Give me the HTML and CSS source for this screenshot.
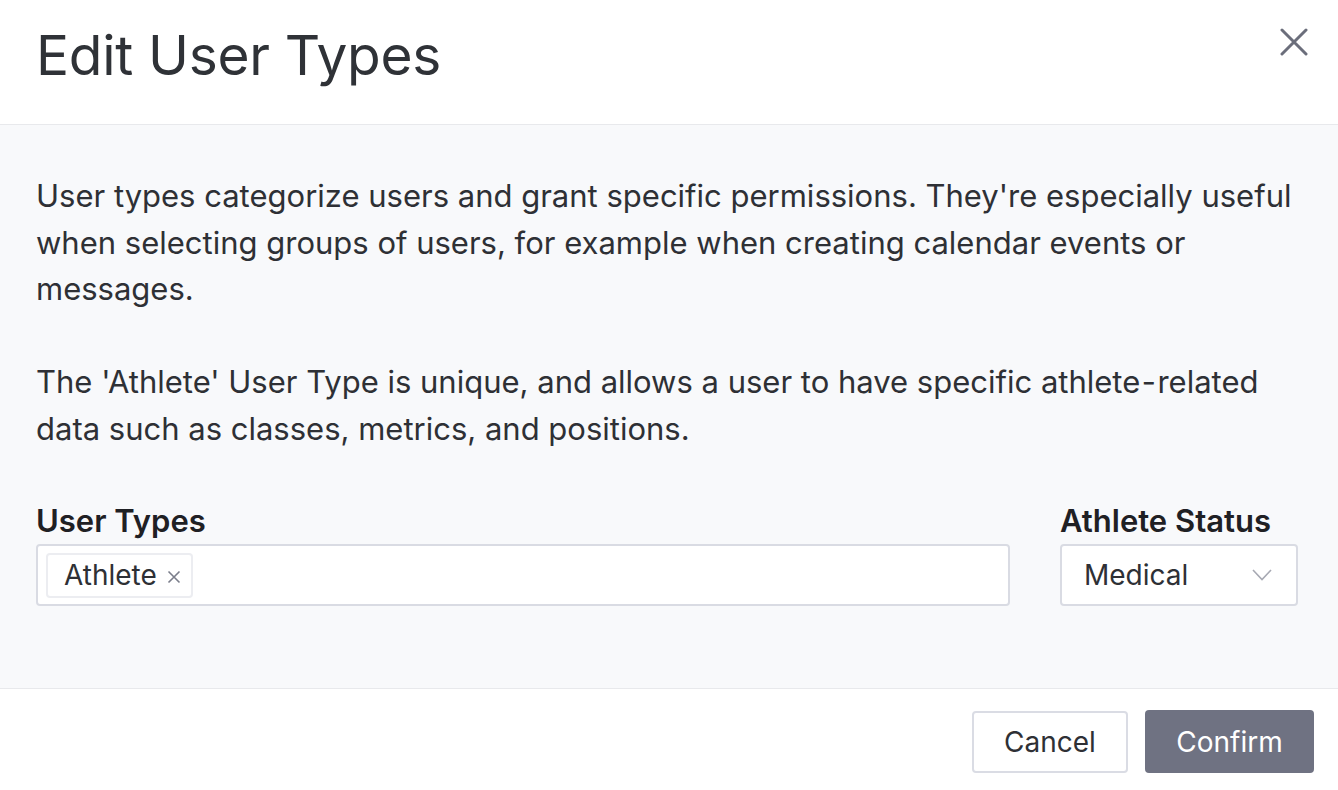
FILE: index.html
```html
<!DOCTYPE html>
<html>
<head>
<meta charset="utf-8">
<link rel="stylesheet" href="styles.css">
</head>
<body>
<div class="modal">
  <header class="head">
    <h1 class="title">Edit User Types</h1>
    <button class="close" aria-label="Close">
      <svg width="28" height="28" viewBox="0 0 28 28"><path d="M2 2L26 26M26 2L2 26" stroke="#6b6e7b" stroke-width="3" stroke-linecap="round"/></svg>
    </button>
  </header>
  <section class="body">
    <p class="para">User types categorize users and grant specific permissions. They're especially useful when selecting groups of users, for example when creating calendar events or messages.</p>
    <p class="para">The 'Athlete' User Type is unique, and allows a user to have specific athlete<span class="nbh">&#8209;</span>related data such as classes, metrics, and positions.</p>
    <div class="fields">
      <div class="field grow">
        <label class="label">User Types</label>
        <div class="input">
          <span class="chip">Athlete
            <svg class="chip-x" width="14" height="14" viewBox="0 0 14 14"><path d="M1.5 1.5L12.5 12.5M12.5 1.5L1.5 12.5" stroke="#7a7d8a" stroke-width="1.6"/></svg>
          </span>
        </div>
      </div>
      <div class="field status">
        <label class="label">Athlete Status</label>
        <div class="select">
          <span>Medical</span>
          <svg width="20" height="12" viewBox="0 0 20 12"><path d="M1 1L10 10.5L19 1" fill="none" stroke="#a7a9b3" stroke-width="1.6"/></svg>
        </div>
      </div>
    </div>
  </section>
  <footer class="foot">
    <button class="btn cancel">Cancel</button>
    <button class="btn confirm">Confirm</button>
  </footer>
</div>
</body>
</html>
```
FILE: styles.css
```css
* { box-sizing: border-box; }
html, body { margin: 0; padding: 0; }
body {
  font-family: Inter, "Noto Sans", sans-serif;
  background: #ffffff;
  color: #2e3035;
  width: 1338px;
  height: 790px;
  overflow: hidden;
}
.modal { display: flex; flex-direction: column; height: 790px; }
.head {
  height: 125px;
  display: flex;
  justify-content: space-between;
  align-items: flex-start;
  padding: 0 30px 0 36px;
  border-bottom: 1px solid #e8e9ec;
  background: #fff;
}
.title {
  margin: 21px 0 0;
  font-size: 55px;
  font-weight: 400;
  line-height: 68px;
  color: #2f3237;
  letter-spacing: -0.3px;
}
.close {
  margin-top: 28px;
  background: none;
  border: 0;
  padding: 0;
  width: 28px;
  height: 28px;
  cursor: pointer;
}
.close svg { display: block; }
.body {
  flex: 1;
  background: #f8f9fb;
  padding: 48px 40px 0 36px;
  border-bottom: 1px solid #e8e9ec;
}
.para {
  margin: 0 0 46.5px;
  font-size: 31px;
  line-height: 46.5px;
  color: #2e3035;
}
.nbh { padding: 0 3px; }
.fields {
  display: flex;
  gap: 50px;
  margin-top: 51px;
}
.field { display: flex; flex-direction: column; }
.grow { flex: 1; }
.status { width: 238px; }
.label {
  font-size: 31px;
  font-weight: 600;
  line-height: 36px;
  color: #1f2024;
  margin-bottom: 5px;
}
.input, .select {
  height: 62px;
  background: #fff;
  border: 2px solid #d9dbe3;
  border-radius: 4px;
  display: flex;
  align-items: center;
}
.input { padding: 0 8px; }
.chip {
  display: inline-flex;
  align-items: center;
  gap: 10px;
  height: 45px;
  padding: 0 10px 0 16px;
  border: 2px solid #ecedf1;
  border-radius: 4px;
  font-size: 28px;
  color: #2e3035;
}
.chip-x { margin-top: 3px; }
.select {
  justify-content: space-between;
  padding: 0 24px 0 22px;
  font-size: 28px;
  color: #2e3035;
}
.foot {
  height: 101px;
  display: flex;
  justify-content: flex-end;
  align-items: flex-start;
  gap: 17px;
  padding: 21px 24px 0 0;
}
.btn {
  font-family: Inter, "Noto Sans", sans-serif;
  font-size: 28px;
  height: 63px;
  border-radius: 4px;
  cursor: pointer;
}
.cancel {
  width: 156px;
  background: #fff;
  border: 2px solid #dadce4;
  color: #2e3035;
  margin-top: 1px;
  height: 62px;
}
.confirm {
  width: 169px;
  background: #6f7282;
  border: 0;
  color: #fff;
}
```
